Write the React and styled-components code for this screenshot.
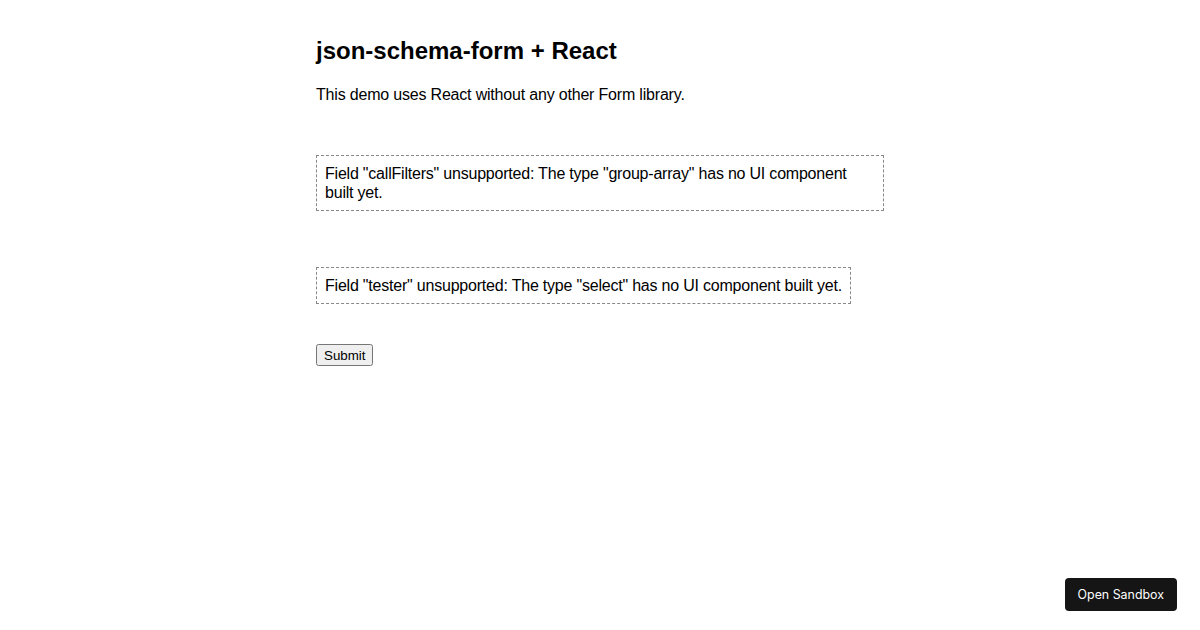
import React from "react";
import styled, { createGlobalStyle } from "styled-components";

const GlobalStyle = createGlobalStyle`
  html, body {
    margin: 0;
    padding: 0;
    background: #fff;
  }
  body {
    font-family: "Liberation Sans", Arial, sans-serif;
    color: #000;
  }
`;

const Page = styled.main`
  max-width: 568px;
  margin: 0 auto;
  padding-top: 37px;
`;

const Title = styled.h1`
  margin: 0 0 21px;
  font-size: 24px;
  font-weight: 700;
  line-height: 28px;
`;

const Intro = styled.p`
  margin: 0 0 51px;
  font-size: 16px;
  line-height: 18px;
  letter-spacing: -0.19px;
`;

const Form = styled.form`
  display: flex;
  flex-direction: column;
  align-items: flex-start;
`;

const FieldRow = styled.div`
  margin-bottom: ${(p) => p.gap}px;
`;

const Unsupported = styled.div`
  display: inline-block;
  box-sizing: border-box;
  max-width: 100%;
  padding: 8px;
  border: 1px dashed #888;
  font-size: 16px;
  line-height: 19px;
  letter-spacing: -0.21px;
`;

const SubmitButton = styled.button`
  height: 22px;
  font-family: "Liberation Sans", Arial, sans-serif;
  font-size: 13.33px;
`;

const SandboxButton = styled.a`
  position: fixed;
  right: 23px;
  bottom: 19px;
  display: flex;
  align-items: center;
  height: 33px;
  padding: 0 13px;
  border-radius: 4px;
  background: #151515;
  color: #fff;
  font-family: Inter, "Liberation Sans", sans-serif;
  font-size: 12.4px;
  text-decoration: none;
  cursor: pointer;
`;

const fields = [
  { name: "callFilters", type: "group-array", gap: 56 },
  { name: "tester", type: "select", gap: 40 },
];

const App = () => {
  return (
    <>
      <GlobalStyle />
      <Page>
        <Title>json-schema-form + React</Title>
        <Intro>This demo uses React without any other Form library.</Intro>
        <Form onSubmit={(e) => e.preventDefault()}>
          {fields.map((f) => (
            <FieldRow key={f.name} gap={f.gap}>
              <Unsupported>
                {`Field "${f.name}" unsupported: The type "${f.type}" has no UI component built yet.`}
              </Unsupported>
            </FieldRow>
          ))}
          <SubmitButton type="submit">Submit</SubmitButton>
        </Form>
      </Page>
      <SandboxButton>Open Sandbox</SandboxButton>
    </>
  );
};

export default App;
